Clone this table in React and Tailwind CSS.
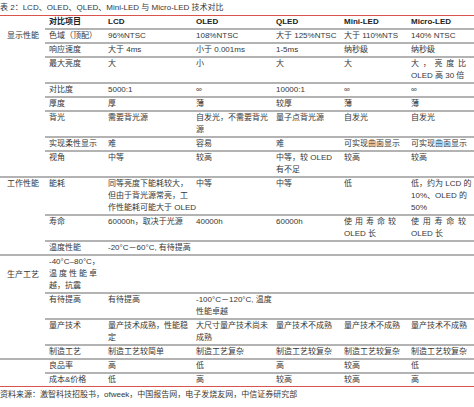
const rows = [
  { cells: ['对比项目', 'LCD', 'OLED', 'QLED', 'Mini-LED', 'Micro-LED'], bold: true },
  { group: '显示性能', cells: ['色域（顶配）', '96%NTSC', '108%NTSC', '大于 125%NTSC', '大于 110%NTS', '140% NTSC'] },
  { cells: ['响应速度', '大于 4ms', '小于 0.001ms', '1-5ms', '纳秒级', '纳秒级'] },
  { cells: ['最大亮度', '大', '小', '大', '大', [{ t: '大，亮度比', w: 'w-[55px]' }, 'OLED 高 30 倍']] },
  { cells: ['对比度', '5000:1', '∞', '10000:1', '∞', '∞'] },
  { cells: ['厚度', '厚', '薄', '较厚', '薄', '薄'] },
  { cells: ['背光', '需要背光源', ['自发光，不需要背光', '源'], '量子点背光源', '自发光', '自发光'] },
  { cells: ['实现柔性显示', '难', '容易', '难', '可实现曲面显示', '可实现曲面显示'] },
  { cells: ['视角', '中等', '较高', ['中等，较 OLED', '有不足'], '较高', '较高'], full: true },
  {
    group: '工作性能',
    cells: [
      '能耗',
      ['同等亮度下能耗较大，', '但由于背光源常亮，工', '作性能耗可能大于 OLED'],
      '中等',
      '中等',
      '低',
      ['低，约为 LCD 的', '10%、OLED 的', '50%'],
    ],
  },
  {
    cells: [
      '寿命',
      '60000h，取决于光源',
      '40000h',
      '60000h',
      [{ t: '使用寿命较', w: 'w-[52px]' }, 'OLED 长'],
      [{ t: '使用寿命较', w: 'w-[55px]' }, 'OLED 长'],
    ],
  },
  { cells: ['温度性能', '-20°C－60°C, 有待提高', '', '', '', ''], full: true },
  {
    group: '生产工艺',
    center: true,
    cells: [['-40°C–80°C，', { t: '温度性能卓', w: 'w-[48px]' }, '越，抗震'], '', '', '', '', ''],
  },
  { cells: ['有待提高', '有待提高', ['-100°C－120°C, 温度', '性能卓越'], '', '', ''] },
  {
    cells: [
      '量产技术',
      ['量产技术成熟，性能稳', '定'],
      ['大尺寸量产技术尚未', '成熟'],
      '量产技术不成熟',
      '量产技术不成熟',
      '量产技术不成熟',
    ],
  },
  { cells: ['制造工艺', '制造工艺较简单', '制造工艺复杂', '制造工艺较复杂', '制造工艺较复杂', '制造工艺较复杂'], full: true },
  { cells: ['良品率', '高', '低', '高', '较高', '低'] },
  { cells: ['成本&价格', '低', '高', '较高', '较高', '高'], red: true },
];

function Cell({ value, bold }) {
  const lines = Array.isArray(value) ? value : [value];
  return (
    <div className={`pl-1 ${bold ? 'font-bold text-[#222]' : ''}`}>
      {lines.map((line, i) =>
        typeof line === 'string' ? (
          <div key={i} className="whitespace-nowrap">
            {line}
          </div>
        ) : (
          <div key={i} className={`text-justify [text-align-last:justify] ${line.w}`}>
            {line.t}
          </div>
        )
      )}
    </div>
  );
}

function Row({ row }) {
  const line = row.red ? 'border-b border-[#d9534f]' : 'border-b-2 border-[#b3b3b3]';
  const edge = row.full || row.red;
  return (
    <div className="flex">
      <div
        className={`w-[45px] shrink-0 pl-[7px] whitespace-nowrap ${edge ? line : ''} ${
          row.center ? 'flex items-center' : ''
        }`}
      >
        {row.group}
      </div>
      <div className={`flex-1 grid grid-cols-[59px_88px_80px_68px_67px_67px] ${line}`}>
        {row.cells.map((c, i) => (
          <Cell key={i} value={c} bold={row.bold} />
        ))}
      </div>
    </div>
  );
}

export default function App() {
  return (
    <div className="w-[474px] h-[407px] bg-white text-[#363636] text-[8px] leading-[12px] font-['Liberation_Sans','Noto_Sans_CJK_SC',sans-serif] overflow-hidden">
      <div className="h-[16px] leading-[15px] border-b border-[#d9534f] whitespace-nowrap">
        表 2：LCD、OLED、QLED、Mini-LED 与 Micro-LED 技术对比
      </div>
      {rows.map((r, i) => (
        <Row key={i} row={r} />
      ))}
      <div className="pt-[2px] whitespace-nowrap">
        资料来源：激智科技招股书，ofweek，中国报告网，电子发烧友网，中信证券研究部
      </div>
    </div>
  );
}
